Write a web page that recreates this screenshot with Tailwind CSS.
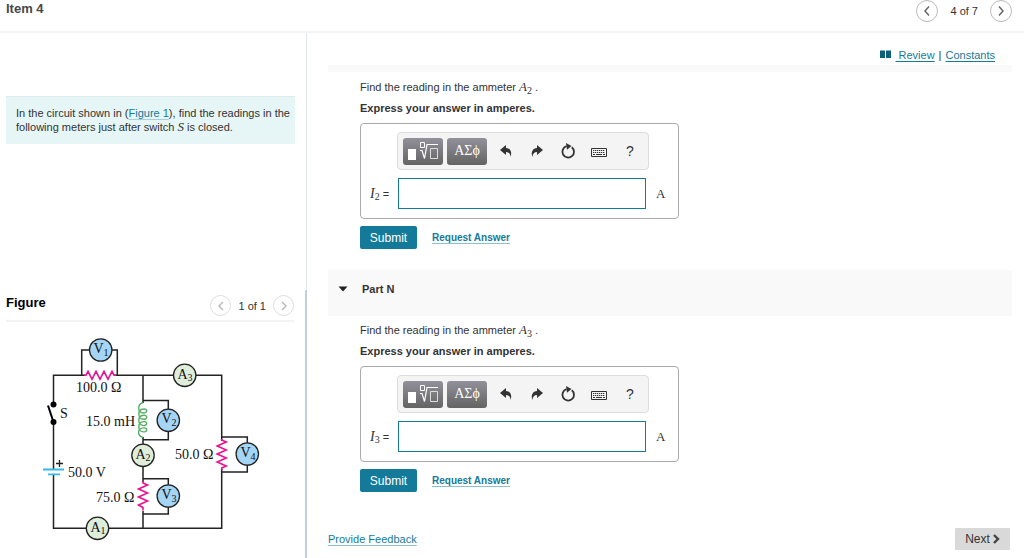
<!DOCTYPE html>
<html lang="en">
<head>
  <meta charset="UTF-8">
  <meta name="viewport" content="width=device-width, initial-scale=1.0">
  <title>Item 4</title>
  <script src="https://cdn.jsdelivr.net/npm/@tailwindcss/browser@4"></script>
</head>
<body class="bg-white text-[#333] text-[11px] leading-[13px] font-['Liberation_Sans',sans-serif] min-h-screen flex flex-col">

  <!-- Header -->
  <header class="h-[33px] shrink-0 flex items-start justify-between pl-[6px] pr-3 border-b-2 border-[#f3f3f3]">
    <h1 class="pt-px text-[13px] leading-4 font-bold text-[#484848]">Item 4</h1>
    <nav class="flex items-center gap-3">
      <button class="size-[22px] rounded-full border border-[#bbb] flex items-center justify-center" aria-label="Previous item">
        <svg class="size-3" viewBox="0 0 12 12" fill="none" stroke="#666" stroke-width="1.5"><path d="M8 1.5L4 6l4 4.5"/></svg>
      </button>
      <span>4 of 7</span>
      <button class="size-[22px] rounded-full border border-[#bbb] flex items-center justify-center" aria-label="Next item">
        <svg class="size-3" viewBox="0 0 12 12" fill="none" stroke="#666" stroke-width="1.5"><path d="M4 1.5L8 6l-4 4.5"/></svg>
      </button>
    </nav>
  </header>

  <div class="flex-1 flex">
    <!-- Problem and figure -->
    <aside class="w-[307px] shrink-0 flex flex-col">
      <div class="h-[257px] pt-[63px] pl-[6px] pr-[11px] border-r border-[#dfe6ec]">
        <p class="bg-[#e6f6f6] border-t border-[#dcebeb] pl-[10px] pt-[10px] pb-[10px]">In the circuit shown in (<a href="#figure" class="text-[#147a9a] underline decoration-[#a5cfdc] underline-offset-2">Figure 1</a>), find the readings in the following meters just after switch <i class="font-['Liberation_Serif',serif] text-[13px] leading-[13px]">S</i> is closed.</p>
      </div>

      <div id="figure" class="flex-1 pl-[6px] pr-[11px] border-r-2 border-[#bfd0e0]">
        <div class="h-8 flex items-start justify-between border-b-2 border-[#f3f3f3]">
          <h2 class="pt-[5px] text-[13px] leading-4 font-bold text-black">Figure</h2>
          <div class="pt-[5px] flex items-center gap-[7px]">
            <button class="size-[21px] rounded-full border border-[#ddd] flex items-center justify-center" aria-label="Previous figure">
              <svg class="size-3" viewBox="0 0 12 12" fill="none" stroke="#bbb" stroke-width="1.5"><path d="M8 2L4 6l4 4"/></svg>
            </button>
            <span class="pt-[2px]">1 of 1</span>
            <button class="size-[21px] rounded-full border border-[#ddd] flex items-center justify-center" aria-label="Next figure">
              <svg class="size-3" viewBox="0 0 12 12" fill="none" stroke="#bbb" stroke-width="1.5"><path d="M4 2l4 4-4 4"/></svg>
            </button>
          </div>
        </div>

        <svg class="ml-6 mt-2 w-[240px] h-[215px] font-['Liberation_Serif',serif]" viewBox="30 330 240 215" fill="none" role="img" aria-label="Circuit diagram">
          <!-- wires -->
          <g stroke="#222" stroke-width="1.5">
            <path d="M53.5 404V375.3H85M114 375.3H221.7V441M81.7 375.3V350H117.3V375.3"/>
            <path d="M143 375.3V403M143 400.5H168.3V439.7H143M143 437V482M143 478.7H168.3V514H143M143 511V528.3"/>
            <path d="M221.7 437H247.3V472H221.7M221.7 469V528.3H53.5V474M53.5 469V422"/>
          </g>
          <!-- resistors -->
          <g stroke="#ec0f8c" stroke-width="1.6">
            <path d="M84 375.3h2l2-4 4 8 4-8 4 8 4-8 4 8 4-8 2 4h2"/>
            <path d="M143 481v2l4.500 2-9 4 9 4-9 4 9 4-9 4 4.500 2.500v3"/>
            <path d="M221.700 439v1l4.500 2-9 4 9 4-9 4 9 4-9 4 9 4-4.500 2v2"/>
          </g>
          <!-- inductor -->
          <path stroke="#55b063" stroke-width="1.4" d="M143 402.500C137 404 137.500 413 143.500 413C148 413 147.500 408.500 143.500 409C137 409.500 137.500 419.300 143.500 419.300C148 419.300 147.500 414.800 143.500 415.300C137 415.800 137.500 425.600 143.500 425.600C148 425.600 147.500 421.100 143.500 421.600C137 422.100 137.500 431.900 143.500 431.900C148 431.900 147.500 427.400 143.500 427.900C137 428.400 137 436 143 437.500"/>
          <!-- switch and battery -->
          <path stroke="#000" stroke-width="2" d="M48 405.500L53.500 422"/>
          <circle cx="53.5" cy="404.5" r="3" fill="#000"/>
          <circle cx="53.5" cy="422" r="3" fill="#000"/>
          <path stroke="#35b8ea" stroke-width="1.8" d="M43 469.500H64M48 474.300H60"/>
          <path stroke="#222" stroke-width="1.3" d="M56 463.500h7M59.500 460v7"/>
          <!-- meters -->
          <g stroke="#222" stroke-width="1.3" fill="#a4d5f5">
            <circle cx="100.7" cy="350" r="11.2"/>
            <circle cx="168.3" cy="420.3" r="11.2"/>
            <circle cx="168.3" cy="496" r="11.2"/>
            <circle cx="247.3" cy="454" r="11.2"/>
          </g>
          <g stroke="#222" stroke-width="1.3" fill="#dfeedb">
            <circle cx="97.5" cy="528.3" r="11.2"/>
            <circle cx="143" cy="455.3" r="11.2"/>
            <circle cx="184.7" cy="375.3" r="11.2"/>
          </g>
          <g fill="#111" font-size="14" text-anchor="middle">
            <text x="101" y="353">V<tspan font-size="10" dy="3">1</tspan></text>
            <text x="169" y="423">V<tspan font-size="10" dy="3">2</tspan></text>
            <text x="169" y="499">V<tspan font-size="10" dy="3">3</tspan></text>
            <text x="248" y="457">V<tspan font-size="10" dy="3">4</tspan></text>
            <text x="98" y="532">A<tspan font-size="10" dy="2">1</tspan></text>
            <text x="143" y="459">A<tspan font-size="10" dy="2">2</tspan></text>
            <text x="185" y="379">A<tspan font-size="10" dy="2">3</tspan></text>
          </g>
          <g fill="#111" font-size="14">
            <text x="76" y="392">100.0 Ω</text>
            <text x="86" y="426">15.0 mH</text>
            <text x="60" y="418">S</text>
            <text x="175" y="459">50.0 Ω</text>
            <text x="68" y="477">50.0 V</text>
            <text x="96" y="502">75.0 Ω</text>
          </g>
        </svg>
      </div>
    </aside>

    <!-- Answers -->
    <main class="flex-1 flex flex-col pl-[21px] pr-3">
      <div class="h-8 pt-4 pr-[17px] flex items-start justify-end gap-1">
        <svg class="w-[11px] h-[9px] mt-px" viewBox="0 0 11 9" fill="#0b5f78"><path d="M0 .5h5v8L4.500 8H0zM6 .5h5V8H6.500l-.5.5z"/></svg>
        <a href="#review" class="text-[#147a9a] underline underline-offset-2 whitespace-pre"> Review</a>
        <span>|</span>
        <a href="#constants" class="text-[#147a9a] underline underline-offset-2">Constants</a>
      </div>
      <div class="h-[7px] bg-[#f9f9f9]"></div>

      <section class="pl-8 pt-2 h-[198px]">
        <p class="h-[15px] leading-[15px]">Find the reading in the ammeter <i class="font-['Liberation_Serif',serif] text-[13px] leading-[13px]">A</i><sub class="font-['Liberation_Serif',serif] text-[10px]">2</sub> .</p>
        <p class="mt-[7px] font-bold">Express your answer in amperes.</p>
        <div class="mt-2 w-[319px] h-[96px] border border-[#aaa] rounded-[4px] pt-2">
          <div class="ml-9 w-[252px] h-[38px] bg-[#f4f4f4] border border-[#ddd] rounded-[4px] flex items-center pl-[5px]">
            <button class="w-10 h-[27px] rounded-[3px] bg-linear-to-b from-[#92919b] to-[#646464] flex items-center justify-center" aria-label="Templates">
              <svg class="w-8 h-5" viewBox="0 0 32 20" fill="none" stroke="#fff"><path fill="#fff" stroke="none" d="M1 8h8v11H1z"/><path d="M13.500 1.500h4v5h-4z"/><path stroke-width="1.2" d="M13 9.500h2l2.500 8L20 3.500H31"/><path stroke="#ddd" d="M23.500 7.500h7v10h-7z"/></svg>
            </button>
            <button class="ml-1 w-10 h-[27px] rounded-[3px] bg-linear-to-b from-[#92919b] to-[#646464] text-white text-sm font-['Liberation_Serif',serif]">ΑΣϕ</button>
            <button class="ml-[11px] size-4" aria-label="Undo"><svg viewBox="0 0 16 16" fill="#333"><path d="M2 7L8 2v3c4 0 6.500 4 4.500 9 0-3-1.500-5-4.500-5v3z"/></svg></button>
            <button class="ml-[15px] size-4" aria-label="Redo"><svg viewBox="0 0 16 16" fill="#333"><path d="M14 7L8 2v3C4 5 1.500 9 3.500 14 3.500 11 5 9 8 9v3z"/></svg></button>
            <button class="ml-[15px] size-4" aria-label="Reset"><svg viewBox="0 0 16 16" fill="none" stroke="#333" stroke-width="1.8"><path d="M11.800 4.200A5.800 5.800 0 1 1 6.500 3.200"/><path fill="#333" stroke="none" d="M6 0L11.500 3 7 6.800z"/></svg></button>
            <button class="ml-[15px] size-4" aria-label="Keyboard"><svg viewBox="0 0 16 16" fill="none" stroke="#333"><path d="M.5 5.500h15v8H.5z"/><path stroke-dasharray="1.300 .7" d="M2 7.500h12M2 9.500h12"/><path d="M2 11.500h2M5 11.500h6M12 11.500h2"/></svg></button>
            <button class="ml-[15px] size-4 text-sm leading-4" aria-label="Help">?</button>
          </div>
          <div class="mt-2 flex items-center">
            <label for="i2" class="w-[37px] pl-[9px] whitespace-nowrap"><i class="font-['Liberation_Serif',serif] text-sm leading-[13px]">I</i><sub class="font-['Liberation_Serif',serif] text-[10px]">2</sub> =</label>
            <input id="i2" type="text" class="w-[248px] h-[31px] border border-[#147a9a] bg-white px-2">
            <span class="ml-[10px] text-[13px] font-['Liberation_Serif',serif]">A</span>
          </div>
        </div>
        <div class="mt-[7px] flex items-center">
          <button class="w-[57px] h-[23px] rounded-[2px] bg-[#147a9a] text-white text-xs">Submit</button>
          <a href="#answer" class="ml-[15px] text-[10px] font-bold text-[#147a9a] underline decoration-[#8ac0d0] underline-offset-2">Request Answer</a>
        </div>
      </section>

      <!-- Part N -->
      <h2 class="h-[46px] bg-[#f9f9f9] flex items-start pt-3 pl-[10px] leading-[14px] font-bold">
        <svg class="w-[10px] h-[6px] mt-1 mr-[14px]" viewBox="0 0 10 6" fill="#222"><path d="M.5 .5h9L5 5.500z"/></svg>
        Part N
      </h2>

      <section class="pl-8 pt-[7px] h-[212px]">
        <p class="h-[15px] leading-[15px]">Find the reading in the ammeter <i class="font-['Liberation_Serif',serif] text-[13px] leading-[13px]">A</i><sub class="font-['Liberation_Serif',serif] text-[10px]">3</sub> .</p>
        <p class="mt-[7px] font-bold">Express your answer in amperes.</p>
        <div class="mt-2 w-[319px] h-[96px] border border-[#aaa] rounded-[4px] pt-2">
          <div class="ml-9 w-[252px] h-[38px] bg-[#f4f4f4] border border-[#ddd] rounded-[4px] flex items-center pl-[5px]">
            <button class="w-10 h-[27px] rounded-[3px] bg-linear-to-b from-[#92919b] to-[#646464] flex items-center justify-center" aria-label="Templates">
              <svg class="w-8 h-5" viewBox="0 0 32 20" fill="none" stroke="#fff"><path fill="#fff" stroke="none" d="M1 8h8v11H1z"/><path d="M13.500 1.500h4v5h-4z"/><path stroke-width="1.2" d="M13 9.500h2l2.500 8L20 3.500H31"/><path stroke="#ddd" d="M23.500 7.500h7v10h-7z"/></svg>
            </button>
            <button class="ml-1 w-10 h-[27px] rounded-[3px] bg-linear-to-b from-[#92919b] to-[#646464] text-white text-sm font-['Liberation_Serif',serif]">ΑΣϕ</button>
            <button class="ml-[11px] size-4" aria-label="Undo"><svg viewBox="0 0 16 16" fill="#333"><path d="M2 7L8 2v3c4 0 6.500 4 4.500 9 0-3-1.500-5-4.500-5v3z"/></svg></button>
            <button class="ml-[15px] size-4" aria-label="Redo"><svg viewBox="0 0 16 16" fill="#333"><path d="M14 7L8 2v3C4 5 1.500 9 3.500 14 3.500 11 5 9 8 9v3z"/></svg></button>
            <button class="ml-[15px] size-4" aria-label="Reset"><svg viewBox="0 0 16 16" fill="none" stroke="#333" stroke-width="1.8"><path d="M11.800 4.200A5.800 5.800 0 1 1 6.500 3.200"/><path fill="#333" stroke="none" d="M6 0L11.500 3 7 6.800z"/></svg></button>
            <button class="ml-[15px] size-4" aria-label="Keyboard"><svg viewBox="0 0 16 16" fill="none" stroke="#333"><path d="M.5 5.500h15v8H.5z"/><path stroke-dasharray="1.300 .7" d="M2 7.500h12M2 9.500h12"/><path d="M2 11.500h2M5 11.500h6M12 11.500h2"/></svg></button>
            <button class="ml-[15px] size-4 text-sm leading-4" aria-label="Help">?</button>
          </div>
          <div class="mt-2 flex items-center">
            <label for="i3" class="w-[37px] pl-[9px] whitespace-nowrap"><i class="font-['Liberation_Serif',serif] text-sm leading-[13px]">I</i><sub class="font-['Liberation_Serif',serif] text-[10px]">3</sub> =</label>
            <input id="i3" type="text" class="w-[248px] h-[31px] border border-[#147a9a] bg-white px-2">
            <span class="ml-[10px] text-[13px] font-['Liberation_Serif',serif]">A</span>
          </div>
        </div>
        <div class="mt-[7px] flex items-center">
          <button class="w-[57px] h-[23px] rounded-[2px] bg-[#147a9a] text-white text-xs">Submit</button>
          <a href="#answer" class="ml-[15px] text-[10px] font-bold text-[#147a9a] underline decoration-[#8ac0d0] underline-offset-2">Request Answer</a>
        </div>
      </section>

      <footer class="flex items-center justify-between pr-[2px]">
        <a href="#feedback" class="text-[#147a9a] underline decoration-[#8ac0d0] underline-offset-2">Provide Feedback</a>
        <button class="w-[55px] h-[22px] bg-[#d9d9d9] rounded-[1px] text-xs flex items-center justify-center gap-[3px]">Next
          <svg class="w-[7px] h-[10px]" viewBox="0 0 7 10" fill="none" stroke="#444" stroke-width="2.4"><path d="M1 1l4 4-4 4"/></svg>
        </button>
      </footer>
    </main>
  </div>
</body>
</html>
